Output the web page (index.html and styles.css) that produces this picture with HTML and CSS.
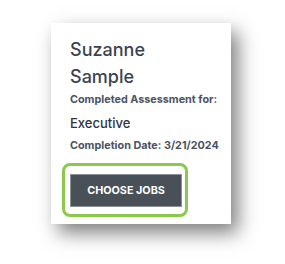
FILE: index.html
```html
<!DOCTYPE html>
<html>
<head>
<meta charset="utf-8">
<link rel="stylesheet" href="styles.css">
</head>
<body>
<div class="card">
  <h2 class="name">Suzanne Sample</h2>
  <p class="label">Completed Assessment for:</p>
  <p class="role">Executive</p>
  <p class="label date">Completion Date: 3/21/2024</p>
  <div class="action">
    <button class="btn">CHOOSE JOBS</button>
    <span class="ring"></span>
  </div>
</div>
</body>
</html>
```
FILE: styles.css
```css
html, body {
  margin: 0;
  padding: 0;
  background: #ffffff;
}
body {
  font-family: Inter, "Noto Sans", sans-serif;
  width: 285px;
  height: 264px;
  overflow: hidden;
}
.card {
  box-sizing: border-box;
  margin: 23px 0 0 51px;
  width: 180px;
  height: 201px;
  background: #ffffff;
  padding: 13px 8px 0 19px;
  box-shadow: 7px 9px 18px rgba(0, 0, 0, 0.5);
}
.name {
  margin: 0;
  width: 120px;
  font-size: 18px;
  line-height: 27px;
  font-weight: 500;
  color: #3c4350;
}
.label {
  margin: 3px 0 0;
  font-size: 10.8px;
  line-height: 14px;
  font-weight: 700;
  color: #4b5363;
  white-space: nowrap;
}
.role {
  margin: 8px 0 0;
  font-size: 13px;
  line-height: 16px;
  font-weight: 500;
  color: #2e3440;
}
.date {
  margin-top: 8px;
}
.action {
  position: relative;
  margin-top: 21px;
  width: 112px;
}
.btn {
  display: block;
  box-sizing: border-box;
  width: 112px;
  height: 33px;
  background: #4a5058;
  border: 1px solid #8c9199;
  color: #ffffff;
  font-family: Inter, "Noto Sans", sans-serif;
  font-size: 10.8px;
  font-weight: 700;
  padding: 0;
}
.ring {
  position: absolute;
  left: -8px;
  top: -11px;
  right: -6px;
  bottom: -10px;
  border: 3px solid #8cc84b;
  border-radius: 8px;
}
```
